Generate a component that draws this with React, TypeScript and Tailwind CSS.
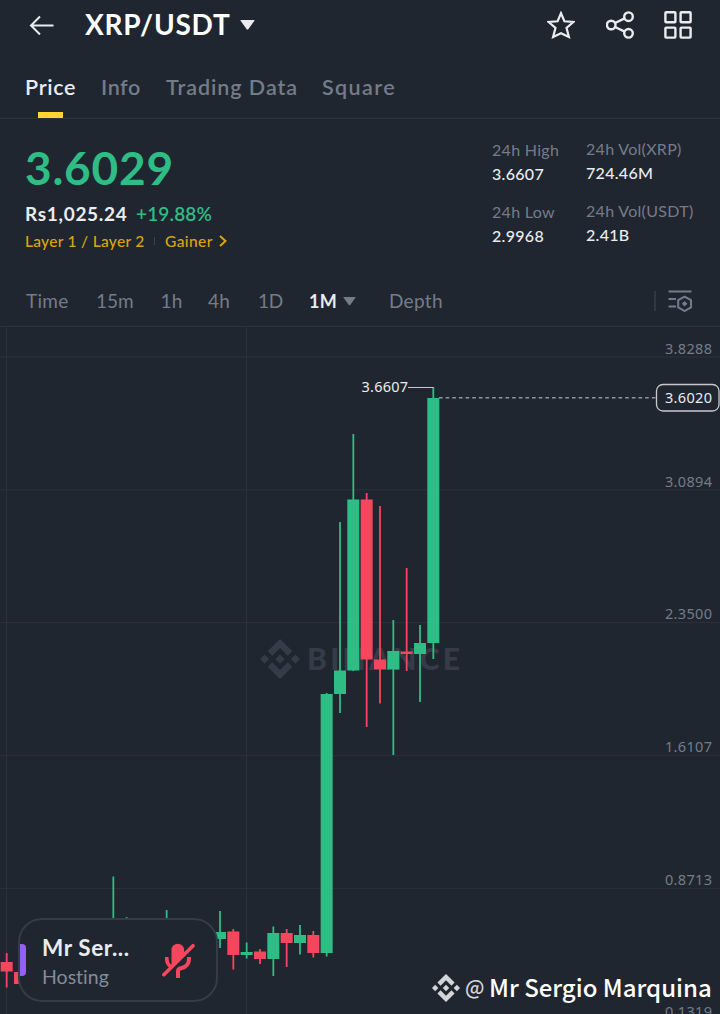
type Candle = {
  slot: number;
  high: number;
  low: number;
  top: number;
  bottom: number;
  up: boolean;
};

const UP = "#2ebd85";
const DOWN = "#f6465d";

// y values are in the chart's own viewBox units
const candles: Candle[] = [
  { slot: 0, high: 627, low: 661.5, top: 636, bottom: 645.5, up: false },
  { slot: 1, high: 646, low: 658, top: 646, bottom: 658, up: false },
  { slot: 8, high: 550.5, low: 620, top: 600, bottom: 620, up: true },
  { slot: 9, high: 591, low: 620, top: 600, bottom: 620, up: false },
  { slot: 12, high: 584, low: 620, top: 600, bottom: 620, up: true },
  { slot: 16, high: 585, low: 622, top: 606, bottom: 613, up: true },
  { slot: 17, high: 603, low: 643.5, top: 605.5, bottom: 629, up: false },
  { slot: 18, high: 616.5, low: 632.5, top: 626, bottom: 629, up: true },
  { slot: 19, high: 623, low: 638, top: 625.5, bottom: 633, up: false },
  { slot: 20, high: 600.5, low: 650, top: 607, bottom: 633, up: true },
  { slot: 21, high: 603, low: 641, top: 607, bottom: 617, up: false },
  { slot: 22, high: 599, low: 628.5, top: 609, bottom: 617, up: true },
  { slot: 23, high: 605, low: 631.5, top: 609, bottom: 627, up: false },
  { slot: 24, high: 367, low: 630.5, top: 368, bottom: 627, up: true },
  { slot: 25, high: 196, low: 387, top: 344.5, bottom: 368, up: true },
  { slot: 26, high: 108, low: 345, top: 173.5, bottom: 344.5, up: true },
  { slot: 27, high: 167, low: 401, top: 173.5, bottom: 333.5, up: false },
  { slot: 28, high: 180, low: 377.5, top: 333.5, bottom: 343.5, up: false },
  { slot: 29, high: 294, low: 429, top: 325, bottom: 343.5, up: true },
  { slot: 30, high: 242, low: 345, top: 325.5, bottom: 328, up: false },
  { slot: 31, high: 299, low: 376, top: 317, bottom: 328, up: true },
  { slot: 32, high: 61, low: 333, top: 72, bottom: 317, up: true },
];

const gridLines = [
  { y: 31, label: "3.8288" },
  { y: 163.8, label: "3.0894" },
  { y: 296.6, label: "2.3500" },
  { y: 429.6, label: "1.6107" },
  { y: 562.4, label: "0.8713" },
  { y: 694, label: "0.1319" },
];

export default function App() {
  return (
    <div className="flex h-[1014px] w-[720px] flex-col overflow-hidden bg-[#202630] font-[Lato,sans-serif] text-[#eaecef] [font-variant-ligatures:none]">
      <Header />
      <Tabs />
      <Summary />
      <Intervals />
      <Chart />
    </div>
  );
}

function Header() {
  return (
    <header className="flex h-[49px] shrink-0 items-center pl-[29px] pr-[28px]">
      <svg width="26" height="20" viewBox="0 0 26 20" fill="none" stroke="#eaecef" strokeWidth="2">
        <path d="M24.5 10.5H2M11 1.500l-9 9 9 9" />
      </svg>
      <h1 className="ml-[30px] w-[146px] whitespace-nowrap text-[28px] font-bold leading-[49px] tracking-[0.75px] text-white">
        XRP/USDT
      </h1>
      <svg className="ml-[9px]" width="15" height="10" viewBox="0 0 15 10" fill="#eaecef">
        <path d="M1 0h13q1 0 .4.8L8.3 9.3q-.8.8-1.6 0L.6.8Q0 0 1 0z" />
      </svg>

      <div className="ml-auto flex items-center">
        <svg width="28" height="28" viewBox="0 0 28 28" fill="none" stroke="#eaecef" strokeWidth="2.2">
          <path d="m14 2.200 3.400 8.100 9 .7-6.900 5.800 2.400 9.200-7.900-3.700-7.900 3.700 2.400-9.200-6.900-5.800 9-.7z" />
        </svg>
        <svg className="ml-[31px]" width="28" height="28" viewBox="0 0 28 28" fill="none" stroke="#eaecef" strokeWidth="2.4">
          <circle cx="5.2" cy="14" r="4.3" />
          <circle cx="22.5" cy="5.7" r="4.3" />
          <circle cx="22.5" cy="22.3" r="4.3" />
          <path d="m9 12 9.700-4.600M9 16l9.700 4.600" />
        </svg>
        <svg className="ml-[30px]" width="28" height="28" viewBox="0 0 28 28" fill="none" stroke="#eaecef" strokeWidth="2.4">
          <rect x="1.4" y="1.2" width="10" height="10" rx="0.8" />
          <rect x="16.6" y="1.2" width="10" height="10" rx="0.8" />
          <rect x="1.4" y="16.6" width="10" height="10" rx="0.8" />
          <rect x="16.6" y="16.6" width="10" height="10" rx="0.8" />
        </svg>
      </div>
    </header>
  );
}

function Tabs() {
  return (
    <nav className="flex h-[70px] shrink-0 items-end border-b border-[#2b323d] pl-[25px] text-[21.5px] font-semibold text-[#757c89]">
      <div className="flex w-[76px] flex-col">
        <span className="leading-[50px] tracking-[0.7px] text-[#eaecef]">Price</span>
        <span className="ml-[13px] h-[6px] w-[25px] bg-[#fcd535]" />
      </div>
      <span className="mb-[6px] w-[65px] leading-[50px] tracking-[0.6px]">Info</span>
      <span className="mb-[6px] w-[156px] whitespace-nowrap leading-[50px] tracking-[0.95px]">Trading Data</span>
      <span className="mb-[6px] leading-[50px] tracking-[1.4px]">Square</span>
    </nav>
  );
}

function Summary() {
  return (
    <section className="flex h-[157px] shrink-0">
      <div className="flex w-[467px] flex-col pl-[25px]">
        <div className="mt-[21px] h-[56px] text-[46px] font-bold leading-[56px] tracking-[0.75px] text-[#2ebd85]">
          3.6029
        </div>
        <div className="mt-[4px] flex h-[28px] whitespace-nowrap text-[19px] leading-[28px]">
          <span className="w-[111px] font-bold tracking-[0.7px]">Rs1,025.24</span>
          <span className="font-semibold tracking-[0.15px] text-[#2ebd85]">+19.88%</span>
        </div>
        <div className="flex h-[26px] items-center whitespace-nowrap text-[15.5px] font-medium leading-[26px] text-[#dba50f]">
          <span className="w-[129px] tracking-[0.3px]">Layer 1 / Layer 2</span>
          <span className="mr-[10px] h-[8px] w-px bg-[#3b434f]" />
          <span className="w-[54px] tracking-[0.4px]">Gainer</span>
          <svg width="8" height="12" viewBox="0 0 8 12" fill="none" stroke="#dba50f" strokeWidth="2">
            <path d="m1 1 5.5 5L1 11" />
          </svg>
        </div>
      </div>

      <div className="flex w-[94px] flex-col pl-[25px] pt-[19px]">
        <Stat label="24h High" value="3.6607" />
        <Stat label="24h Low" value="2.9968" />
      </div>
      <div className="flex flex-col pl-[25px] pt-[18px]">
        <Stat label="24h Vol(XRP)" value="724.46M" />
        <Stat label="24h Vol(USDT)" value="2.41B" />
      </div>
    </section>
  );
}

function Stat({ label, value }: { label: string; value: string }) {
  return (
    <div className="h-[61.5px] whitespace-nowrap text-[16px] tracking-[0.3px]">
      <div className="h-[24px] leading-[24px] text-[#757c89]">{label}</div>
      <div className="h-[24px] font-medium leading-[24px]">{value}</div>
    </div>
  );
}

function Intervals() {
  return (
    <div className="flex h-[51px] shrink-0 items-center border-b border-[#2b323d] pl-[26px] pr-[27px] text-[19px] tracking-[0.3px] text-[#757c89]">
      <span className="w-[70px]">Time</span>
      <span className="w-[64.5px] tracking-[0px]">15m</span>
      <span className="w-[47.5px]">1h</span>
      <span className="w-[50px]">4h</span>
      <span className="w-[51px] tracking-[-0.2px]">1D</span>
      <span className="w-[34px] text-[18px] font-bold text-[#eaecef]">1M</span>
      <svg width="13" height="9" viewBox="0 0 13 9" fill="#757c89">
        <path d="M1 0h11q1 0 .4.8L7.2 8q-.7.8-1.4 0L.6.8Q0 0 1 0z" />
      </svg>
      <span className="ml-[33px]">Depth</span>
      <span className="ml-auto mr-[12px] h-[20px] w-[2px] bg-[#303743]" />
      <svg width="25" height="22" viewBox="0 0 25 22" fill="none" stroke="#757c89" strokeWidth="2">
        <path d="M.5 1.5h23M.5 9h7.5M.5 16.5h7.5" />
        <path d="M16.6 6.6 23 10.2v7.2L16.6 21l-6.4-3.6v-7.2z" />
        <path d="m16.6 11 2.8 2.8-2.8 2.8-2.8-2.8z" fill="#757c89" stroke="none" />
      </svg>
    </div>
  );
}

function Chart() {
  return (
    <main className="relative h-[687px] shrink-0 overflow-hidden">
      <svg className="block" width="720" height="687" viewBox="0 1 720 687">
        {gridLines.map((line) => (
          <path key={line.label} d={`M0 ${line.y}H720`} stroke="#2b323d" />
        ))}
        <path d="M6.5 0V688M246.5 0V688" stroke="#2b323d" />

        {/* watermark */}
        <g fill="#353c47">
          <g transform="translate(260 313) scale(0.316)">
            <BinanceMark />
          </g>
          <text
            x="307"
            y="344"
            textLength="153"
            className="font-[Lato,sans-serif] text-[30px] font-black"
          >
            BINANCE
          </text>
        </g>

        {candles.map((c) => {
          const x = 6.67 + c.slot * 13.333;
          const color = c.up ? UP : DOWN;
          return (
            <g key={c.slot} fill={color}>
              <rect x={x - 0.9} y={c.high} width="1.8" height={c.low - c.high} />
              <rect x={x - 6} y={c.top} width="12" height={c.bottom - c.top} />
            </g>
          );
        })}

        {/* period high */}
        <path d="M408 61.5H433.5" stroke="#c5c9cf" />
        <text
          x="361.5"
          y="66"
          textLength="46.5"
          fill="#eaecef"
          className="font-['Noto_Sans',sans-serif] text-[14.5px]"
        >
          3.6607
        </text>

        {/* axis labels */}
        {gridLines.map((line) => (
          <text
            key={line.label}
            x="665"
            y={line.y - 3.2}
            textLength="47"
            fill="#757c89"
            className="font-['Noto_Sans',sans-serif] text-[14.5px]"
          >
            {line.label}
          </text>
        ))}

        {/* last price */}
        <path d="M439 71.8H656" stroke="#8f959e" strokeWidth="1.4" strokeDasharray="3.6 3.05" />
        <rect x="656.5" y="58.5" width="62.5" height="26.5" rx="6.5" fill="#202630" stroke="#c5c9cf" strokeWidth="1.3" />
        <text
          x="665"
          y="77"
          textLength="47"
          fill="#eaecef"
          className="font-['Noto_Sans',sans-serif] text-[14.5px]"
        >
          3.6020
        </text>
      </svg>

      <HostCard />

      <div className="absolute left-[432px] top-[644px] flex h-[34px] items-center whitespace-nowrap font-['Noto_Sans_CJK_SC',sans-serif] leading-[34px]">
        <svg width="28" height="28" viewBox="0 0 126.61 126.61" fill="#d3d5d9">
          <BinanceMark />
        </svg>
        <span className="-mt-[3px] ml-[5px] w-[24px] text-[20px] font-medium text-[#d3d5d9]">@</span>
        <span className="-mt-[2px] text-[24px] font-medium text-white">Mr Sergio Marquina</span>
      </div>
    </main>
  );
}

function HostCard() {
  return (
    <div className="absolute left-[18px] top-[591px] flex h-[84px] w-[200px] items-center rounded-[24px] border-2 border-[#343c48] bg-[#202630]">
      <span className="h-[32px] w-[6px] rounded-r-[4px] bg-[#9360f2]" />
      <div className="ml-[16px] w-[120px] whitespace-nowrap pt-[3px]">
        <div className="h-[29px] text-[22.5px] font-bold leading-[29px] tracking-[0.6px]">Mr Ser...</div>
        <div className="h-[29px] text-[19.5px] leading-[29px] text-[#858b96]">Hosting</div>
      </div>
      <svg width="34" height="36" viewBox="0 0 34 36" fill="none" stroke={DOWN}>
        <path d="M9.500 8a6.300 6.300 0 0 1 12.600 0v5L9.500 25.500z" fill={DOWN} stroke="none" />
        <path d="M4.800 15v2q0 4.500 4 8" strokeWidth="3.6" />
        <path d="M27 15v2q0 7.500-8 9.200-3 .5-3 3V36" strokeWidth="4" />
        <path d="M1.800 32.700 31 3.700" strokeWidth="3.6" strokeLinecap="round" />
      </svg>
    </div>
  );
}

function BinanceMark() {
  return (
    <path d="M38.73 53.2 63.31 28.62 87.9 53.21 102.2 38.91 63.31 0 24.43 38.9zM0 63.31 14.3 49l14.3 14.31-14.3 14.3zM38.73 73.41 63.31 97.99 87.9 73.4l14.31 14.29-38.9 38.92-38.9-38.9zM98 63.31 112.3 49l14.3 14.3-14.3 14.31zM77.83 63.3 63.31 48.78 48.78 63.3l14.53 14.53z" />
  );
}
